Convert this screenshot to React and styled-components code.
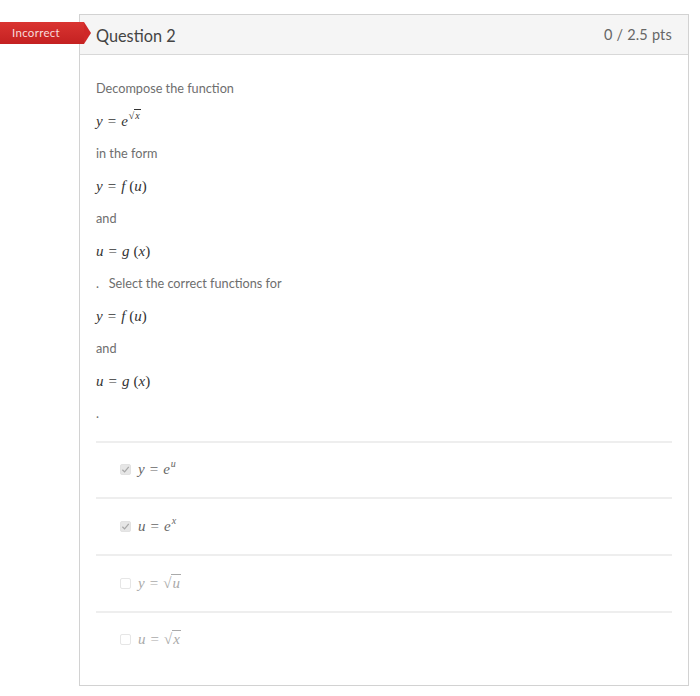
import React from 'react'
import styled, { createGlobalStyle } from 'styled-components'

const GlobalStyle = createGlobalStyle`
  html, body { margin: 0; padding: 0; background: #fff; }
  body { font-family: Lato, "Open Sans", sans-serif; }
`

const Page = styled.div`
  position: relative;
  width: 700px;
  height: 696px;
  padding: 14px 11px 0 79px;
  box-sizing: border-box;
`

const Badge = styled.div`
  position: absolute;
  left: 0;
  top: 22px;
  height: 22px;
  width: 84px;
  background: linear-gradient(#da3431, #c42121);
  color: #f7dcdc;
  font-size: 11.5px;
  line-height: 22px;
  padding-left: 12px;
  box-sizing: border-box;
  letter-spacing: 0.3px;
  z-index: 1;
  &::after {
    content: '';
    position: absolute;
    right: -7px;
    top: 0;
    border-left: 7px solid #cf2828;
    border-top: 11px solid transparent;
    border-bottom: 11px solid transparent;
  }
`

const Card = styled.div`
  border: 1px solid #d2d2d2;
  height: 672px;
  box-sizing: border-box;
  display: flex;
  flex-direction: column;
`

const Header = styled.div`
  height: 39px;
  flex: none;
  display: flex;
  align-items: center;
  justify-content: space-between;
  padding: 0 16px 0 16px;
  background: #f5f5f5;
  border-bottom: 1px solid #d8d8d8;
`

const Title = styled.div`
  font-size: 16.3px;
  color: #444;
  padding-top: 2px;
`

const Points = styled.div`
  font-size: 14.5px;
  color: #666;
  letter-spacing: 0.2px;
`

const Body = styled.div`
  padding: 17px 16px 0 16px;
`

const Para = styled.div`
  font-size: 12.7px;
  color: #6e6e6e;
  line-height: 32.5px;
  height: 32.5px;
  white-space: pre;
`

const Math = styled.span`
  font-family: "Liberation Serif", "DejaVu Serif", serif;
  font-size: 15px;
  color: #333;
  i { font-style: italic; }
`

const Op = styled.span`
  margin: 0 5px;
`

const Paren = styled.span`
  margin-left: 4px;
`

const Sup = styled.sup`
  font-size: 10px;
  vertical-align: 7px;
  line-height: 0;
  margin-left: 1px;
`

const Radicand = styled.span`
  border-top: 1px solid currentColor;
  padding: 0 1px;
  font-style: italic;
`

const Answers = styled.div`
  margin-top: 11px;
`

const Answer = styled.div`
  height: 56.7px;
  border-top: 2px solid #eeeeee;
  box-sizing: border-box;
  display: flex;
  align-items: center;
  padding-left: 24px;
  gap: 7px;
  color: ${p => p.$checked ? '#666' : '#aaa'};
`

const Box = styled.span`
  width: 11px;
  height: 11px;
  border-radius: 2px;
  box-sizing: border-box;
  display: inline-flex;
  align-items: center;
  justify-content: center;
  background: ${p => p.$checked ? '#e6e6e6' : '#fff'};
  border: 1px solid ${p => p.$checked ? '#e2e2e2' : '#e6e6e6'};
`

const AnswerMath = styled(Math)`
  color: inherit;
`

const Check = () => (
  <svg width='9' height='9' viewBox='0 0 10 10'>
    <path d='M1.5 5.2 L4 7.6 L8.6 2' fill='none' stroke='#a8a8a8' strokeWidth='1.4' />
  </svg>
)

const Eq = ({ children }) => <Math>{children}</Math>

const ANSWERS = [
  { checked: true, body: <><i>y</i><Op>=</Op><i>e</i><Sup><i>u</i></Sup></> },
  { checked: true, body: <><i>u</i><Op>=</Op><i>e</i><Sup><i>x</i></Sup></> },
  { checked: false, body: <><i>y</i><Op>=</Op>√<Radicand>u</Radicand></> },
  { checked: false, body: <><i>u</i><Op>=</Op>√<Radicand>x</Radicand></> }
]

export default function App () {
  return <Page>
    <GlobalStyle />
    <Badge>Incorrect</Badge>
    <Card>
      <Header>
        <Title>Question 2</Title>
        <Points>0 / 2.5 pts</Points>
      </Header>
      <Body>
        <Para>Decompose the function</Para>
        <Para><Eq><i>y</i><Op>=</Op><i>e</i><Sup>√<Radicand>x</Radicand></Sup></Eq></Para>
        <Para>in the form</Para>
        <Para><Eq><i>y</i><Op>=</Op><i>f</i><Paren>(<i>u</i>)</Paren></Eq></Para>
        <Para>and</Para>
        <Para><Eq><i>u</i><Op>=</Op><i>g</i><Paren>(<i>x</i>)</Paren></Eq></Para>
        <Para>{'.   Select the correct functions for'}</Para>
        <Para><Eq><i>y</i><Op>=</Op><i>f</i><Paren>(<i>u</i>)</Paren></Eq></Para>
        <Para>and</Para>
        <Para><Eq><i>u</i><Op>=</Op><i>g</i><Paren>(<i>x</i>)</Paren></Eq></Para>
        <Para>.</Para>
        <Answers>
          {ANSWERS.map((a, i) => <Answer key={i} $checked={a.checked}>
            <Box $checked={a.checked}>{a.checked && <Check />}</Box>
            <AnswerMath>{a.body}</AnswerMath>
          </Answer>)}
        </Answers>
      </Body>
    </Card>
  </Page>
}
